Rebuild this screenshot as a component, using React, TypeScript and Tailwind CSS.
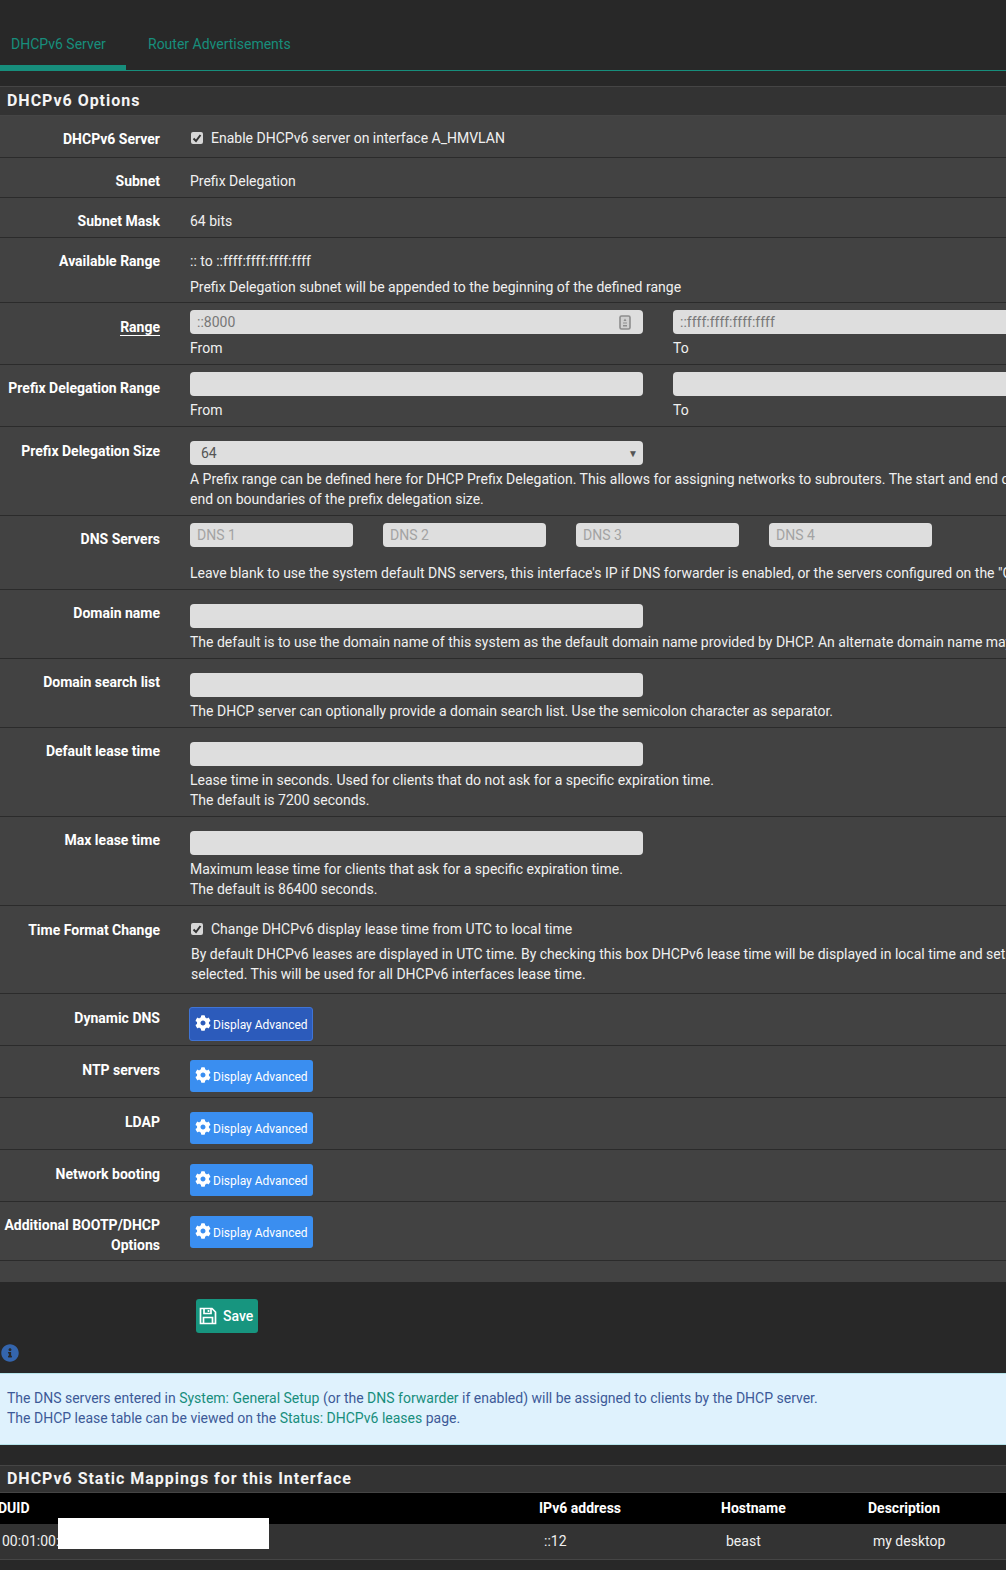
import type { ReactNode } from 'react'
import { FaCog, FaInfoCircle } from 'react-icons/fa'

const fieldInput = 'block h-6 rounded-[4px] bg-[#dedede] px-[7px] text-[14px] leading-6 text-[#777]'

function Row({ label, height, top = 'pt-[13px]', labelTop = 'pt-[13px]', children }: { label: ReactNode; height: string; top?: string; labelTop?: string; children: ReactNode }) {
  return (
    <div className={`flex border-b border-[#2b2b2b] ${height}`}>
      <div className={`w-[160px] shrink-0 text-right text-[14px] font-bold leading-5 text-white ${labelTop}`}>{label}</div>
      <div className={`ml-[30px] min-w-0 flex-1 whitespace-nowrap text-[14px] leading-5 text-[#f0f0f0] ${top}`}>{children}</div>
    </div>
  )
}

function Box({ w, value, placeholder, icon }: { w: string; value?: string; placeholder?: string; icon?: boolean }) {
  return (
    <div className={`${fieldInput} ${w} relative shrink-0 ${placeholder ? 'text-[#a3a3a3]' : ''}`}>
      {value ?? placeholder}
      {icon && (
        <svg className="absolute right-[12px] top-[5px]" width="12" height="15" viewBox="0 0 12 15" fill="none">
          <rect x="1" y="1" width="10" height="13" rx="1.5" fill="#d0d0d0" stroke="#8d8d8d" strokeWidth="1.6" />
          <path d="M6 3.5 7.5 6h-3z M4 7.5h4v1H4z M4 10h4v1.5H4z" fill="#8d8d8d" />
        </svg>
      )}
    </div>
  )
}

function RangePair({ from, to, icon }: { from?: string; to?: string; icon?: boolean }) {
  return (
    <div className="flex gap-[30px]">
      <div className="w-[453px] shrink-0">
        <Box w="w-[453px]" value={from} icon={icon} />
        <div className="mt-[4px]">From</div>
      </div>
      <div className="w-[453px] shrink-0">
        <Box w="w-[453px]" value={to} />
        <div className="mt-[4px]">To</div>
      </div>
    </div>
  )
}

function Check() {
  return (
    <span className="ml-px mr-[8px] flex h-3 w-3 shrink-0 items-center justify-center rounded-[2px] bg-[#d6d6d6]">
      <svg width="10" height="10" viewBox="0 0 10 10" fill="none">
        <path d="M1.5 5.5 4 8l4.5-6" stroke="#333" strokeWidth="2" />
      </svg>
    </span>
  )
}

function Advanced({ focus }: { focus?: boolean }) {
  return (
    <div
      className={`flex items-center rounded-[3px] pl-[5px] text-[12px] text-white ${
        focus ? 'h-[34px] w-[124px] -ml-px border border-[#3f74d6] bg-[#2c5bbb]' : 'h-8 w-[123px] bg-[#3a8ef0]'
      }`}
    >
      <FaCog className="mr-[2px] -mt-[2px] h-[16px] w-[16px] shrink-0" />
      <span className="mt-[2px]">Display Advanced</span>
    </div>
  )
}

function Heading({ height, children }: { height: string; children: ReactNode }) {
  return (
    <div className={`flex items-center border-y border-[#454545] bg-[#333] pl-[7px] text-[16px] font-bold tracking-[0.97px] text-[#f4f4f4] ${height}`}>
      {children}
    </div>
  )
}

export default function App() {
  return (
    <div className="h-[1570px] w-[1006px] overflow-hidden bg-[#282828] font-['Roboto',sans-serif]">
      {/* Tabs */}
      <div className="flex h-[71px] items-end border-b border-[#178e7c] text-[14px] text-[#178e7c]">
        <div className="h-[70px] w-[126px] border-b-[5px] border-[#178e7c] pl-[11px] pt-[34px] leading-5">DHCPv6 Server</div>
        <div className="h-[70px] pl-[22px] pt-[34px] leading-5">Router Advertisements</div>
      </div>

      <div className="mt-[15px]">
        <Heading height="h-[30px]">DHCPv6 Options</Heading>
        <div className="bg-[#424242]">
          <Row label="DHCPv6 Server" height="h-[42px]" top="pt-[12px]">
            <div className="flex items-center">
              <Check />
              Enable DHCPv6 server on interface A_HMVLAN
            </div>
          </Row>
          <Row label="Subnet" height="h-[40px]">Prefix Delegation</Row>
          <Row label="Subnet Mask" height="h-[40px]">64 bits</Row>
          <Row label="Available Range" height="h-[65px]">
            <div>:: to ::ffff:ffff:ffff:ffff</div>
            <div className="mt-[6px]">Prefix Delegation subnet will be appended to the beginning of the defined range</div>
          </Row>
          <Row label={<span className="border-b border-white">Range</span>} height="h-[62px]" top="pt-[7px]" labelTop="pt-[14px]">
            <RangePair from="::8000" to="::ffff:ffff:ffff:ffff" icon />
          </Row>
          <Row label="Prefix Delegation Range" height="h-[62px]" top="pt-[7px]">
            <RangePair />
          </Row>
          <Row label="Prefix Delegation Size" height="h-[89px]" top="pt-[14px]" labelTop="pt-[14px]">
            <div className="relative h-6 w-[453px] rounded-[4px] bg-[#dedede] pl-[11px] leading-6 text-[#555]">
              64
              <span className="absolute right-[5px] top-[1px] text-[10px] text-[#555]">▼</span>
            </div>
            <div className="mt-[4px]">A Prefix range can be defined here for DHCP Prefix Delegation. This allows for assigning networks to subrouters. The start and end of the range must</div>
            <div>end on boundaries of the prefix delegation size.</div>
          </Row>
          <Row label="DNS Servers" height="h-[74px]" top="pt-[7px]">
            <div className="flex gap-[30px]">
              <Box w="w-[163px]" placeholder="DNS 1" />
              <Box w="w-[163px]" placeholder="DNS 2" />
              <Box w="w-[163px]" placeholder="DNS 3" />
              <Box w="w-[163px]" placeholder="DNS 4" />
            </div>
            <div className="mt-[16px]">Leave blank to use the system default DNS servers, this interface's IP if DNS forwarder is enabled, or the servers configured on the "General Setup" page.</div>
          </Row>
          <Row label="Domain name" height="h-[69px]" top="pt-[14px]">
            <Box w="w-[453px]" />
            <div className="mt-[4px]">The default is to use the domain name of this system as the default domain name provided by DHCP. An alternate domain name may be specified here.</div>
          </Row>
          <Row label="Domain search list" height="h-[69px]" top="pt-[14px]">
            <Box w="w-[453px]" />
            <div className="mt-[4px]">The DHCP server can optionally provide a domain search list. Use the semicolon character as separator.</div>
          </Row>
          <Row label="Default lease time" height="h-[89px]" top="pt-[14px]">
            <Box w="w-[453px]" />
            <div className="mt-[4px]">Lease time in seconds. Used for clients that do not ask for a specific expiration time.</div>
            <div>The default is 7200 seconds.</div>
          </Row>
          <Row label="Max lease time" height="h-[89px]" top="pt-[14px]">
            <Box w="w-[453px]" />
            <div className="mt-[4px]">Maximum lease time for clients that ask for a specific expiration time.</div>
            <div>The default is 86400 seconds.</div>
          </Row>
          <Row label="Time Format Change" height="h-[88px]" labelTop="pt-[14px]">
            <div className="flex items-center">
              <Check />
              Change DHCPv6 display lease time from UTC to local time
            </div>
            <div className="ml-px mt-[5px]">By default DHCPv6 leases are displayed in UTC time. By checking this box DHCPv6 lease time will be displayed in local time and set to the time zone</div>
            <div className="ml-px">selected. This will be used for all DHCPv6 interfaces lease time.</div>
          </Row>
          <Row label="Dynamic DNS" height="h-[52px]" top="pt-[13px]" labelTop="pt-[14px]"><Advanced focus /></Row>
          <Row label="NTP servers" height="h-[52px]" top="pt-[14px]" labelTop="pt-[14px]"><Advanced /></Row>
          <Row label="LDAP" height="h-[52px]" top="pt-[14px]" labelTop="pt-[14px]"><Advanced /></Row>
          <Row label="Network booting" height="h-[52px]" top="pt-[14px]" labelTop="pt-[14px]"><Advanced /></Row>
          <Row label="Additional BOOTP/DHCP Options" height="h-[59px]" top="pt-[14px]"><Advanced /></Row>
          <div className="h-[21px]" />
        </div>
      </div>

      {/* Save */}
      <div className="ml-[196px] mt-[17px] flex h-[34px] w-[62px] items-center rounded-[3px] bg-[#17957f] pl-[3px] text-[14px] font-medium text-white">
        <svg className="mr-[6px] shrink-0" width="18" height="18" viewBox="0 0 18 18" fill="none" stroke="currentColor" strokeWidth="1.7">
          <path d="M1.5 1.5h11.5l3.5 3.5v11.5h-15z" />
          <path d="M5 1.5v5h7v-5" />
          <path d="M4.5 16.5v-6h9v6" />
          <path d="M9.5 3v2" />
        </svg>
        Save
      </div>
      <div className="ml-px mt-[11px] h-[18px] text-[#3465ad]">
        <FaInfoCircle className="h-[18px] w-[18px]" />
      </div>

      {/* Notice */}
      <div className="mt-[11px] h-[72px] border-y border-[#b5e3ea] bg-[#dff2fd] pl-[7px] pt-[14px] text-[14px] leading-5 text-[#3d5a98]">
        <div>
          The DNS servers entered in <span className="text-[#178e7c]">System: General Setup</span> (or the <span className="text-[#178e7c]">DNS forwarder</span> if enabled) will be assigned to clients by the DHCP server.
        </div>
        <div>
          The DHCP lease table can be viewed on the <span className="text-[#178e7c]">Status: DHCPv6 leases</span> page.
        </div>
      </div>

      {/* Static mappings */}
      <div className="mt-[20px]">
        <Heading height="h-[28px]">DHCPv6 Static Mappings for this Interface</Heading>
        <div className="grid h-[31px] grid-cols-[539px_181px_147px_1fr] items-center bg-black text-[14px] font-bold text-white">
          <div className="-ml-[2px]">DUID</div>
          <div>IPv6 address</div>
          <div className="pl-px">Hostname</div>
          <div className="pl-px">Description</div>
        </div>
        <div className="relative grid h-[36px] grid-cols-[539px_181px_147px_1fr] items-center border-b border-[#454545] bg-[#333] text-[14px] text-[#f0f0f0]">
          <div className="pl-[2px]">00:01:00:</div>
          <div className="pl-[5px]">::12</div>
          <div className="pl-[6px]">beast</div>
          <div className="pl-[6px]">my desktop</div>
          <div className="absolute left-[58px] top-[-6px] h-[31px] w-[211px] bg-white" />
        </div>
      </div>
    </div>
  )
}
